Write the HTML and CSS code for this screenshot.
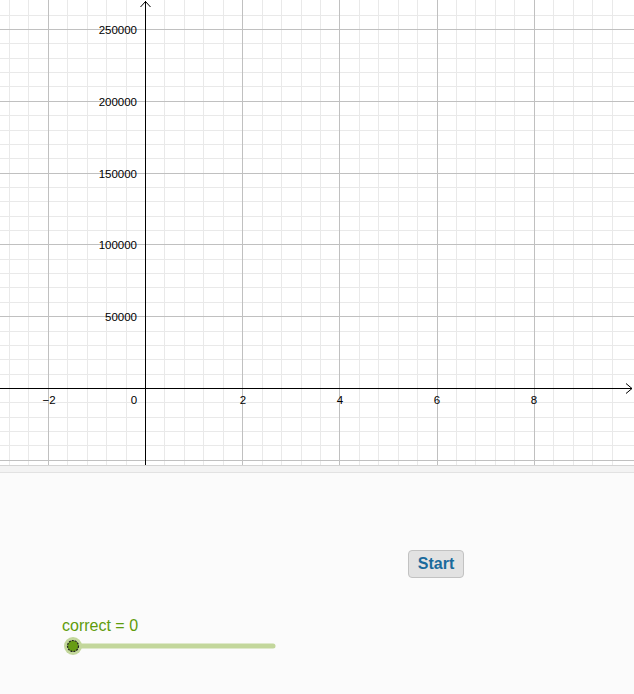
FILE: index.html
```html
<!DOCTYPE html>
<html lang="en">
<head>
    <meta charset="UTF-8">
    <title>Graph</title>
    <link rel="stylesheet" href="styles.css">
</head>
<body>
    <!-- graphics view -->
    <div class="graph">
        <svg width="634" height="465" viewBox="0 0 634 465" shape-rendering="crispEdges">
            <path class="grid-minor" d="M9.5 0V465M28.5 0V465M67.5 0V465M87.5 0V465M106.5 0V465M126.5 0V465M164.5 0V465M184.5 0V465M203.5 0V465M223.5 0V465M262.5 0V465M281.5 0V465M301.5 0V465M320.5 0V465M359.5 0V465M378.5 0V465M398.5 0V465M417.5 0V465M456.5 0V465M475.5 0V465M495.5 0V465M514.5 0V465M553.5 0V465M573.5 0V465M592.5 0V465M612.5 0V465
                M0 15.5H634M0 43.5H634M0 58.5H634M0 72.5H634M0 86.5H634M0 115.5H634M0 130.5H634M0 144.5H634M0 158.5H634M0 187.5H634M0 201.5H634M0 216.5H634M0 230.5H634M0 259.5H634M0 273.5H634M0 287.5H634M0 302.5H634M0 331.5H634M0 345.5H634M0 359.5H634M0 374.5H634M0 402.5H634M0 417.5H634M0 431.5H634M0 445.5H634"/>
            <path class="grid-major" d="M48.5 0V465M242.5 0V465M339.5 0V465M437.5 0V465M534.5 0V465
                M0 29.5H634M0 101.5H634M0 173.5H634M0 244.5H634M0 316.5H634M0 460.5H634"/>
            <path class="axis" d="M145.5 1V465M0 388.5H632"/>
            <path class="arrow" shape-rendering="auto" d="M140.5 7L145.5 1.5L150.5 7M626 383.5L632 388.5L626 393.5"/>

            <g class="labels-y">
                <text x="137" y="33.5">250000</text>
                <text x="137" y="105.5">200000</text>
                <text x="137" y="177.5">150000</text>
                <text x="137" y="248.5">100000</text>
                <text x="137" y="320.5">50000</text>
            </g>
            <g class="labels-x">
                <text x="49" y="404">&#8722;2</text>
                <text x="134" y="404">0</text>
                <text x="243" y="404">2</text>
                <text x="340" y="404">4</text>
                <text x="437" y="404">6</text>
                <text x="534" y="404">8</text>
            </g>
        </svg>
    </div>

    <div class="divider"></div>

    <!-- controls -->
    <div class="panel">
        <button class="start-btn">Start</button>
        <div class="slider">
            <div class="slider-label">correct = 0</div>
            <svg width="222" height="20" viewBox="0 0 222 20">
                <line class="track" x1="11" y1="10" x2="211" y2="10"/>
                <circle class="thumb-halo" cx="11" cy="10" r="9"/>
                <circle class="thumb" cx="11" cy="10" r="5.5"/>
            </svg>
        </div>
    </div>
</body>
</html>
```

FILE: styles.css
```css
* {
    margin: 0;
    padding: 0;
    box-sizing: border-box;
}

body {
    background: #fbfbfb;
    font-family: 'Liberation Sans', Arial, sans-serif;
    width: 634px;
    height: 694px;
    overflow: hidden;
}

.graph {
    width: 634px;
    height: 465px;
    background: #ffffff;
}

.graph svg {
    display: block;
}

.grid-minor {
    stroke: #e9e9e9;
    stroke-width: 1;
    fill: none;
}

.grid-major {
    stroke: #c0c0c0;
    stroke-width: 1;
    fill: none;
}

.axis {
    stroke: #000000;
    stroke-width: 1;
    fill: none;
}

.arrow {
    stroke: #000000;
    stroke-width: 1;
    fill: none;
}

.labels-y text,
.labels-x text {
    font-family: 'Liberation Sans', Arial, sans-serif;
    font-size: 11.5px;
    fill: #000000;
}

.labels-y text {
    text-anchor: end;
}

.labels-x text {
    text-anchor: middle;
}

.divider {
    height: 8px;
    background: #f3f3f3;
    border-top: 1px solid #d4d4d4;
    border-bottom: 1px solid #e2e2e2;
}

.panel {
    display: flex;
    flex-direction: column;
    align-items: flex-start;
    padding: 77px 0 0 62px;
}

.start-btn {
    margin-left: 346px;
    width: 56px;
    height: 28px;
    background: #e2e2e2;
    border: 1.5px solid #c2c2c2;
    border-radius: 4px;
    color: #1a6a9c;
    font-family: 'Liberation Sans', Arial, sans-serif;
    font-size: 16px;
    font-weight: 700;
    cursor: pointer;
}

.slider {
    margin-top: 39px;
}

.slider-label {
    color: #609c0c;
    font-size: 16px;
    line-height: 18px;
}

.slider svg {
    display: block;
    margin: 1px 0 0 0;
}

.track {
    stroke: #c3d79c;
    stroke-width: 5;
    stroke-linecap: round;
}

.thumb-halo {
    fill: #c3d79c;
}

.thumb {
    fill: #689c14;
    stroke: #222222;
    stroke-width: 1.2;
    stroke-dasharray: 2 1;
}
```
